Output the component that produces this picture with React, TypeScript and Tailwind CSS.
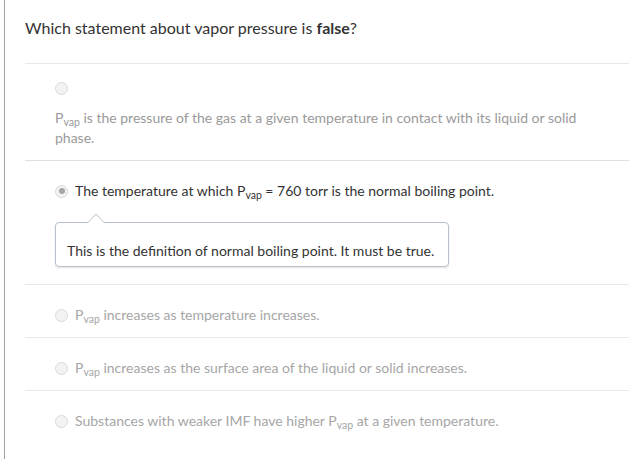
import React from 'react'

function Radio({ checked }: { checked?: boolean }) {
  return (
    <span className="inline-flex h-[13px] w-[13px] shrink-0 items-center justify-center rounded-full border border-[#d9d9d9] bg-[#f3f3f3]">
      {checked && <span className="h-[6px] w-[6px] rounded-full bg-[#a6a6a6]" />}
    </span>
  )
}

function Vap() {
  return <span className="relative top-[3px] text-[10.5px] leading-none">vap</span>
}

export default function App() {
  return (
    <div className="ml-[4px] min-h-[459px] border-l border-[#a3a3a3] bg-white pl-[20px] pr-[5px] font-['Lato','Liberation_Sans',sans-serif]">
      <div className="pt-[17px] pb-[24px] text-[16px] leading-[22px] text-[#333]">
        Which statement about vapor pressure is <b className="font-bold">false</b>?
      </div>

      <div className="border-t border-[#e8e8e8] px-[30px] pt-[14px] pb-[12px] text-[14px] leading-[20px] text-[#9a9a9a]">
        <div className="flex h-[20px] items-center">
          <Radio />
        </div>
        <p className="mt-[10px]">
          P<Vap /> is the pressure of the gas at a given temperature in contact with its liquid or solid phase.
        </p>
      </div>

      <div className="border-t border-[#e0e0e0] px-[30px] pt-[20px] pb-[17px] text-[14px] leading-[20px]">
        <div className="flex items-center gap-[7px] text-[#333]">
          <Radio checked />
          <span>
            The temperature at which P<Vap /> = 760 torr is the normal boiling point.
          </span>
        </div>
        <div className="relative mt-[21px] w-[394px] rounded-[4px] border border-[#b9c2cb] bg-white px-[11px] pt-[18px] pb-[5px] text-[#333] shadow-[0_1px_2px_rgba(0,0,0,0.12)]">
          <svg className="absolute left-[31px] top-[-10px]" width="18" height="11" viewBox="0 0 18 11">
            <path d="M0 10.5 L9 1 L18 10.5" fill="white" stroke="#b9c2cb" strokeWidth="1" />
          </svg>
          This is the definition of normal boiling point. It must be true.
        </div>
      </div>

      {[
        <>P<Vap /> increases as temperature increases.</>,
        <>P<Vap /> increases as the surface area of the liquid or solid increases.</>,
        <>Substances with weaker IMF have higher P<Vap /> at a given temperature.</>,
      ].map((t, i) => (
        <div
          key={i}
          className="flex items-center gap-[7px] border-t border-[#e8e8e8] px-[30px] pt-[20px] pb-[12px] text-[14px] leading-[20px] text-[#a6a6a6]"
        >
          <Radio />
          <span>{t}</span>
        </div>
      ))}
    </div>
  )
}
